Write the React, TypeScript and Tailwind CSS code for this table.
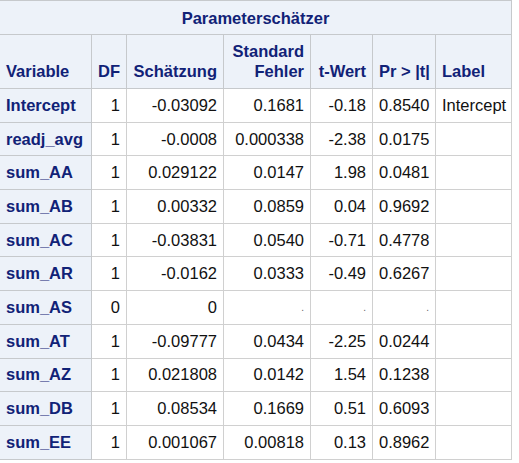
const rows = [
  ["Intercept", "1", "-0.03092", "0.1681", "-0.18", "0.8540", "Intercept"],
  ["readj_avg", "1", "-0.0008", "0.000338", "-2.38", "0.0175", ""],
  ["sum_AA", "1", "0.029122", "0.0147", "1.98", "0.0481", ""],
  ["sum_AB", "1", "0.00332", "0.0859", "0.04", "0.9692", ""],
  ["sum_AC", "1", "-0.03831", "0.0540", "-0.71", "0.4778", ""],
  ["sum_AR", "1", "-0.0162", "0.0333", "-0.49", "0.6267", ""],
  ["sum_AS", "0", "0", ".", ".", ".", ""],
  ["sum_AT", "1", "-0.09777", "0.0434", "-2.25", "0.0244", ""],
  ["sum_AZ", "1", "0.021808", "0.0142", "1.54", "0.1238", ""],
  ["sum_DB", "1", "0.08534", "0.1669", "0.51", "0.6093", ""],
  ["sum_EE", "1", "0.001067", "0.00818", "0.13", "0.8962", ""],
];

const th =
  "border border-[#c6c9cc] bg-[#edf2f9] text-[#112277] font-bold px-[6px] pb-[7px] align-bottom leading-[20px] whitespace-nowrap";
const td = "border border-[#d0d0d0] bg-white text-[#111] px-[6px] text-right whitespace-nowrap";

export default function App() {
  return (
    <div className="w-[519px] h-[463px] bg-white overflow-hidden">
      <table
        className="table-fixed w-[512px] border-collapse border border-[#c6c9cc] border-l-0 text-[16.5px] ml-[-1px]"
        style={{ fontFamily: '"Liberation Sans", Arial, sans-serif' }}
      >
        <colgroup>
          <col className="w-[92px]" />
          <col className="w-[35px]" />
          <col className="w-[97px]" />
          <col className="w-[87px]" />
          <col className="w-[62px]" />
          <col className="w-[63px]" />
          <col className="w-[76px]" />
        </colgroup>
        <thead>
          <tr className="h-[34px]">
            <th colSpan={7} className={th + " text-center !pb-0 align-middle"}>
              Parameterschätzer
            </th>
          </tr>
          <tr className="h-[54px]">
            <th className={th + " text-left"}>Variable</th>
            <th className={th + " text-right"}>DF</th>
            <th className={th + " text-right"}>Schätzung</th>
            <th className={th + " text-right"}>
              Standard
              <br />
              Fehler
            </th>
            <th className={th + " text-right"}>t-Wert</th>
            <th className={th + " text-right"}>Pr &gt; |t|</th>
            <th className={th + " text-left"}>Label</th>
          </tr>
        </thead>
        <tbody>
          {rows.map((r) => (
            <tr key={r[0]} className="h-[33.7px]">
              <th className="border border-[#c6c9cc] bg-[#edf2f9] text-[#112277] font-bold px-[6px] text-left whitespace-nowrap">
                {r[0]}
              </th>
              <td className={td}>{r[1]}</td>
              <td className={td}>{r[2]}</td>
              {r.slice(3, 6).map((v, i) =>
                v === "." ? (
                  <td key={i} className={td + " text-[10px] text-[#666]"}>
                    .
                  </td>
                ) : (
                  <td key={i} className={td}>
                    {v}
                  </td>
                )
              )}
              <td className={td + " !text-left"}>{r[6]}</td>
            </tr>
          ))}
        </tbody>
      </table>
    </div>
  );
}
